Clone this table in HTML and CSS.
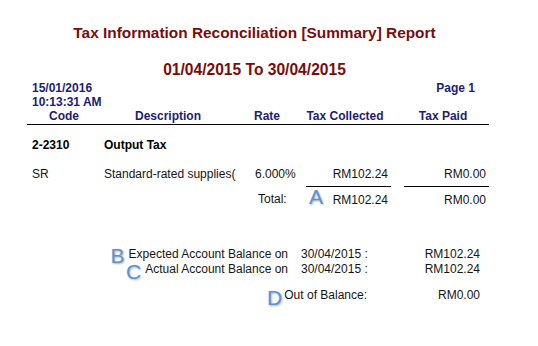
FILE: index.html
```html
<!DOCTYPE html>
<html>
<head>
<meta charset="utf-8">
<link rel="stylesheet" href="styles.css">
</head>
<body>
<div class="report">
  <div class="title">Tax Information Reconciliation [Summary] Report</div>
  <div class="range">01/04/2015 To 30/04/2015</div>
  <div class="meta">
    <div class="stamp">15/01/2016<br>10:13:31 AM</div>
    <div class="page">Page 1</div>
  </div>
  <div class="head">
    <div>Code</div>
    <div>Description</div>
    <div>Rate</div>
    <div>Tax Collected</div>
    <div>Tax Paid</div>
  </div>
  <div class="grid group">
    <div class="b">2-2310</div>
    <div class="b">Output Tax</div>
  </div>
  <div class="grid line">
    <div>SR</div>
    <div>Standard-rated supplies(</div>
    <div>6.000%</div>
    <div class="amt">RM102.24</div>
    <div class="amt">RM0.00</div>
  </div>
  <div class="grid total">
    <div></div>
    <div></div>
    <div class="lbl">Total:</div>
    <div class="amt ruled"><span class="mark ma">A</span><span>RM102.24</span></div>
    <div class="amt ruled">RM0.00</div>
  </div>
  <div class="summary">
    <div class="lab"><span class="mark mb">B</span>Expected Account Balance on</div>
    <div class="dt">30/04/2015 :</div>
    <div class="val">RM102.24</div>
    <div class="lab"><span class="mark mc">C</span>Actual Account Balance on</div>
    <div class="dt">30/04/2015 :</div>
    <div class="val">RM102.24</div>
    <div class="lab wide oob"><span class="mark md">D</span>Out of Balance:</div>
    <div class="val oob">RM0.00</div>
  </div>
</div>
</body>
</html>
```
FILE: styles.css
```css
html, body {
  margin: 0;
  padding: 0;
  background: #ffffff;
}
body {
  font-family: "Liberation Sans", Arial, sans-serif;
  width: 538px;
  height: 346px;
  overflow: hidden;
}
.report {
  padding-top: 23px;
}
.title {
  width: 509px;
  text-align: center;
  font-size: 15.4px;
  line-height: 19px;
  font-weight: bold;
  color: #7a0c0c;
}
.range {
  width: 509px;
  text-align: center;
  font-size: 15.6px;
  line-height: 20px;
  font-weight: bold;
  color: #7a0c0c;
  margin-top: 18px;
}
.meta {
  display: flex;
  justify-content: space-between;
  margin-top: 1px;
  padding-left: 32px;
  width: 443px;
  font-size: 12px;
  line-height: 14px;
  font-weight: bold;
  color: #1c1c7a;
}
.head {
  display: grid;
  grid-template-columns: 74px 134px 64px 92px 8px 88px;
  margin-left: 27px;
  width: 462px;
  font-size: 12px;
  line-height: 14px;
  font-weight: bold;
  color: #1c1c7a;
  text-align: center;
  padding-bottom: 1px;
  border-bottom: 1px solid #000;
}
.head > div:nth-child(5) {
  grid-column: 6;
}
.grid {
  display: grid;
  grid-template-columns: 77px 151px 51px 85px 13px 85px;
  margin-left: 27px;
  width: 462px;
  font-size: 12px;
  line-height: 14px;
  color: #141414;
}
.grid > div:first-child {
  padding-left: 5px;
}
.grid > div:nth-child(5) {
  grid-column: 6;
}
.group {
  margin-top: 13px;
}
.b {
  font-weight: bold;
  color: #000;
}
.line {
  margin-top: 15px;
}
.amt {
  text-align: right;
  padding-right: 3px;
}
.total {
  margin-top: 5px;
}
.total > div {
  padding-top: 6px;
}
.lbl {
  padding-left: 3px;
}
.ruled {
  border-top: 1px solid #000;
  display: flex;
  justify-content: space-between;
  align-items: baseline;
}
.total > div.ruled:last-child {
  justify-content: flex-end;
}
.mark {
  font-size: 21px;
  line-height: 0;
  font-weight: normal;
  color: #5d93d4;
  text-shadow: 1px 1px 2px rgba(60, 80, 110, 0.45);
}
.ma {
  margin-left: 3px;
  vertical-align: -3px;
}
.mb {
  margin-right: 4px;
  vertical-align: -5px;
}
.mc {
  margin-right: 4px;
  vertical-align: -6px;
}
.md {
  margin-right: 2px;
  vertical-align: -6px;
}
.summary {
  display: grid;
  grid-template-columns: 288px 13px 66px 113px;
  margin-top: 40px;
  font-size: 12px;
  line-height: 15px;
  color: #141414;
  white-space: nowrap;
}
.lab {
  text-align: right;
}
.dt {
  grid-column: 3;
}
.val {
  text-align: right;
}
.wide {
  grid-column: 1 / 4;
}
.oob {
  margin-top: 11px;
}
```
